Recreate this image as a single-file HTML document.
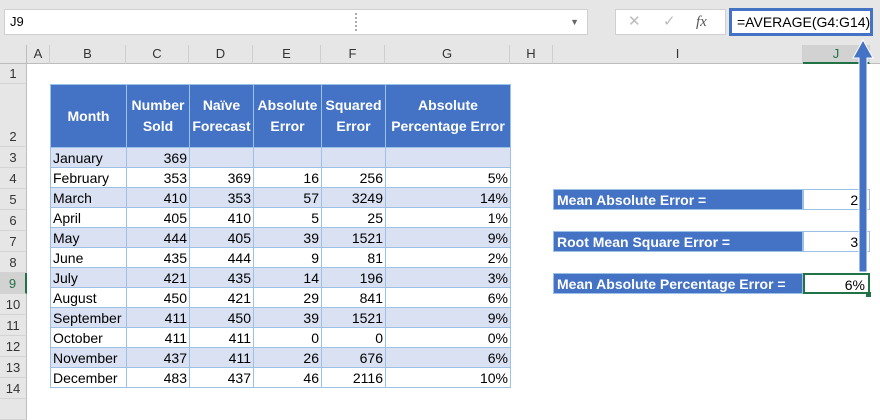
<!DOCTYPE html><html><head><style>
body{margin:0;width:880px;height:406px;background:#fff;position:relative;overflow:hidden;font-family:"Liberation Sans",sans-serif;}
.a{position:absolute;box-sizing:border-box;}
.rh{position:absolute;left:0;width:27px;background:#e6e6e6;border-bottom:1px solid #d4d4d4;border-right:1px solid #bdbdbd;font-size:13px;color:#333;text-align:center;box-sizing:border-box;display:flex;align-items:flex-end;justify-content:center;padding-bottom:2px}
.ch{position:absolute;top:45px;height:19px;background:#e6e6e6;border-right:1px solid #cfcfcf;border-bottom:1px solid #bdbdbd;font-size:13px;color:#333;text-align:center;line-height:18px;box-sizing:border-box}
table{position:absolute;left:50px;top:84px;border-collapse:collapse;font-size:14px;}
td{border:1px solid #9bc2e6;height:20px;padding:0 2px;box-sizing:border-box;text-align:right;white-space:nowrap}
td:first-child{text-align:left}
tr.h td{background:#4472c4;color:#fff;font-weight:bold;text-align:center;height:63px;line-height:21px}
tr.o td{background:#d9e1f2}
.lab{position:absolute;left:553px;width:250px;height:21px;background:#4472c4;color:#fff;font-weight:bold;font-size:14px;line-height:21px;padding-left:3px;box-sizing:border-box;border:1px solid #9bc2e6}
.val{position:absolute;left:803px;width:67px;height:21px;font-size:14px;text-align:right;line-height:20px;padding-right:3px;box-sizing:border-box;border:1px solid #9bc2e6}
</style></head><body>
<div class="a" style="left:0;top:0;width:880px;height:45px;background:#e6e6e6"></div>
<div class="a" style="left:4px;top:9px;width:584px;height:26px;background:#fff;border:1px solid #d0d0d0;font-size:13px;line-height:24px;padding-left:5px">J9<span style="position:absolute;right:8px;font-size:9px;color:#666">▼</span></div>
<div class="a" style="left:355px;top:13px;width:2px;height:18px;border-left:2px dotted #aaa;left:355px"></div>
<div class="a" style="left:615px;top:9px;width:111px;height:26px;background:#fff;border:1px solid #d0d0d0;font-size:15px;line-height:24px;color:#bbb"><span style="position:absolute;left:12px">✕</span><span style="position:absolute;left:47px">✓</span><span style="position:absolute;left:80px;color:#555;font-style:italic;font-family:'Liberation Serif',serif">fx</span></div>
<div class="a" style="left:729px;top:8px;width:144px;height:28px;background:#fff;border:3px solid #4472c4;font-size:14px;line-height:22px;padding-left:5px">=AVERAGE(G4:G14)</div>
<div class="a" style="left:0;top:45px;width:27px;height:19px;background:#e6e6e6;border-right:1px solid #bdbdbd;border-bottom:1px solid #bdbdbd"></div>
<div class="ch" style="left:27px;width:23px">A</div>
<div class="ch" style="left:50px;width:76px">B</div>
<div class="ch" style="left:126px;width:63px">C</div>
<div class="ch" style="left:189px;width:64px">D</div>
<div class="ch" style="left:253px;width:68px">E</div>
<div class="ch" style="left:321px;width:64px">F</div>
<div class="ch" style="left:385px;width:125px">G</div>
<div class="ch" style="left:510px;width:43px">H</div>
<div class="ch" style="left:553px;width:250px">I</div>
<div class="ch" style="left:803px;width:67px;background:#d2d2d2;border-bottom:2px solid #217346;color:#217346">J</div>
<div class="ch" style="left:870px;width:10px;border-right:none"></div>
<div class="rh" style="top:64px;height:20px">1</div>
<div class="rh" style="top:84px;height:63px">2</div>
<div class="rh" style="top:147px;height:21px">3</div>
<div class="rh" style="top:168px;height:21px">4</div>
<div class="rh" style="top:189px;height:21px">5</div>
<div class="rh" style="top:210px;height:21px">6</div>
<div class="rh" style="top:231px;height:21px">7</div>
<div class="rh" style="top:252px;height:21px">8</div>
<div class="rh" style="top:273px;height:21px;background:#d2d2d2;color:#217346;border-right:2px solid #217346">9</div>
<div class="rh" style="top:294px;height:21px">10</div>
<div class="rh" style="top:315px;height:21px">11</div>
<div class="rh" style="top:336px;height:21px">12</div>
<div class="rh" style="top:357px;height:21px">13</div>
<div class="rh" style="top:378px;height:21px">14</div>
<div class="rh" style="top:399px;height:21px"></div>
<table>
<colgroup><col style="width:76px"><col style="width:63px"><col style="width:64px"><col style="width:68px"><col style="width:64px"><col style="width:125px"></colgroup>
<tr class="h"><td>Month</td><td>Number<br>Sold</td><td>Naïve<br>Forecast</td><td>Absolute<br>Error</td><td>Squared<br>Error</td><td>Absolute<br>Percentage Error</td></tr>
<tr class="o"><td>January</td><td>369</td><td></td><td></td><td></td><td></td></tr>
<tr><td>February</td><td>353</td><td>369</td><td>16</td><td>256</td><td>5%</td></tr>
<tr class="o"><td>March</td><td>410</td><td>353</td><td>57</td><td>3249</td><td>14%</td></tr>
<tr><td>April</td><td>405</td><td>410</td><td>5</td><td>25</td><td>1%</td></tr>
<tr class="o"><td>May</td><td>444</td><td>405</td><td>39</td><td>1521</td><td>9%</td></tr>
<tr><td>June</td><td>435</td><td>444</td><td>9</td><td>81</td><td>2%</td></tr>
<tr class="o"><td>July</td><td>421</td><td>435</td><td>14</td><td>196</td><td>3%</td></tr>
<tr><td>August</td><td>450</td><td>421</td><td>29</td><td>841</td><td>6%</td></tr>
<tr class="o"><td>September</td><td>411</td><td>450</td><td>39</td><td>1521</td><td>9%</td></tr>
<tr><td>October</td><td>411</td><td>411</td><td>0</td><td>0</td><td>0%</td></tr>
<tr class="o"><td>November</td><td>437</td><td>411</td><td>26</td><td>676</td><td>6%</td></tr>
<tr><td>December</td><td>483</td><td>437</td><td>46</td><td>2116</td><td>10%</td></tr>
</table>
<div class="lab" style="top:189px">Mean Absolute Error =</div><div class="val" style="top:189px">25</div>
<div class="lab" style="top:231px">Root Mean Square Error =</div><div class="val" style="top:231px">31</div>
<div class="lab" style="top:273px">Mean Absolute Percentage Error =</div><div class="val" style="top:273px;border:2px solid #217346">6%</div>
<div class="a" style="left:866px;top:292px;width:5px;height:5px;background:#217346"></div>
<svg class="a" style="left:850px;top:36px" width="26" height="240"><path d="M13 4 L3 22 L9 22 L9 236 L17 236 L17 22 L23 22 Z" fill="#4472c4" stroke="#fff" stroke-width="1"/></svg>
</body></html>
